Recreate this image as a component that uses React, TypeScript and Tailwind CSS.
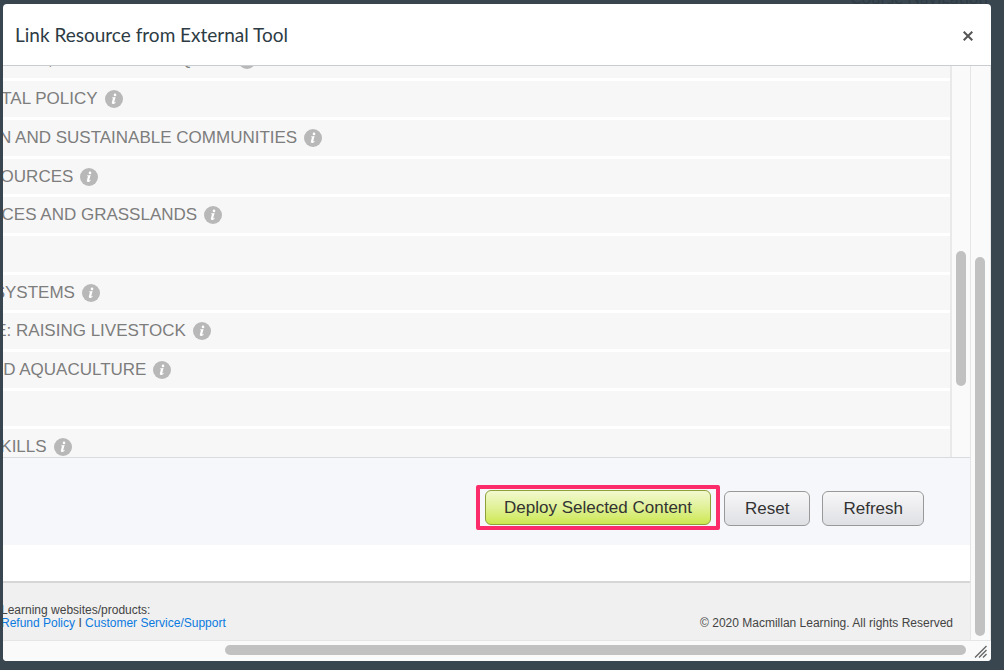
import React from "react";
import clsx from "clsx";

interface Chapter {
  id: number;
  title: string;
}

const chapters: Chapter[] = [
  { id: 1, title: "HUMAN MIGRATION, HEALTH AND EQUITY" },
  { id: 2, title: "ENVIRONMENTAL POLICY" },
  { id: 3, title: "URBANIZATION AND SUSTAINABLE COMMUNITIES" },
  { id: 4, title: "MINERAL RESOURCES" },
  { id: 5, title: "SOIL RESOURCES AND GRASSLANDS" },
  { id: 6, title: "" },
  { id: 7, title: "MARINE ECOSYSTEMS" },
  { id: 8, title: "AGRICULTURE: RAISING LIVESTOCK" },
  { id: 9, title: "FISHERIES AND AQUACULTURE" },
  { id: 10, title: "" },
  { id: 11, title: "READINESS SKILLS" },
];

function InfoIcon() {
  return (
    <svg viewBox="0 0 18 18" className="size-[18px] shrink-0" aria-hidden="true">
      <circle cx="9" cy="9" r="9" fill="#b8b8b8" />
      <circle cx="10" cy="4.9" r="1.3" fill="#fff" />
      <path
        d="M7 7.4 10.6 7.1 9.2 12.2C9.1 12.7 9.4 12.7 10.4 11.8L10.8 12.2C9.8 13.5 9 14 8 14 7 14 6.6 13.3 6.9 12.3L7.9 8.6C8 8.1 7.8 8 6.9 7.9Z"
        fill="#fff"
      />
    </svg>
  );
}

function ChapterRow({ chapter }: { chapter: Chapter }) {
  return (
    <li className="flex h-[39px] items-center gap-[7px] border-b-3 border-white bg-[#f7f7f7] pr-2 whitespace-nowrap nth-[3n+4]:h-[38px]">
      {chapter.title && (
        <>
          <span>{chapter.title}</span>
          <InfoIcon />
        </>
      )}
    </li>
  );
}

interface ActionButtonProps {
  primary?: boolean;
  children: React.ReactNode;
}

function ActionButton({ primary, children }: ActionButtonProps) {
  return (
    <button
      type="button"
      className={clsx(
        "h-[35px] rounded-md border bg-linear-to-b text-[17px] leading-8 text-[#333]",
        primary
          ? "border-[#8ea03a] from-[#f3f9cf] to-[#cde84c] px-[18px]"
          : "border-[#999] from-[#f7f7f8] to-[#dfe0e4] px-5"
      )}
    >
      {children}
    </button>
  );
}

export default function App() {
  return (
    <div className="relative h-screen overflow-hidden bg-[#394650] pt-1 pr-[13px] pb-[9px] pl-[3px] font-['Liberation_Sans',Arial,sans-serif]">
      {/* page underneath the dialog */}
      <div className="absolute -top-[10px] right-[16px] font-['Lato',sans-serif] text-[17px] leading-4 text-[#2f3b45]">
        Course Navigation
      </div>

      <div
        role="dialog"
        aria-labelledby="dialog-title"
        className="relative flex h-full flex-col overflow-hidden rounded-sm bg-white"
      >
        <header className="flex h-[62px] shrink-0 items-center justify-between border-b border-[#c7cdd1] pt-0.5 pr-4 pl-3">
          <h2
            id="dialog-title"
            className="font-['Lato',sans-serif] text-[19px] text-[#2d3b45]"
          >
            Link Resource from External Tool
          </h2>
          <button type="button" aria-label="Close" className="p-0.5 text-[#555]">
            <svg viewBox="0 0 10 10" className="size-[10px]" stroke="currentColor" strokeWidth="2">
              <path d="M.7.7 9.3 9.3M9.3.7.7 9.3" />
            </svg>
          </button>
        </header>

        <div className="flex min-h-0 flex-1">
          <main className="flex min-w-0 flex-1 flex-col">
            <div className="flex min-h-0 flex-1 overflow-hidden border-b border-[#d9dcdf]">
              <ul className="-mt-6 -ml-[117px] min-w-0 flex-1 text-[17px] text-[#7d7d7d]">
                {chapters.map((chapter) => (
                  <ChapterRow key={chapter.id} chapter={chapter} />
                ))}
              </ul>
              <div className="w-5 shrink-0 border-l-2 border-[#e9e9e9] bg-[#fafafa] px-1 pt-[185px]">
                <div className="h-[135px] rounded-full bg-[#c1c1c1]" />
              </div>
            </div>

            <div className="flex h-[87px] shrink-0 items-start justify-end bg-[#f5f7fa] pt-[27px] pr-[46px]">
              <div className="mr-1 h-[45px] rounded-xs border-4 border-[#fb2c69] px-[5px] py-px">
                <ActionButton primary>Deploy Selected Content</ActionButton>
              </div>
              <div className="flex gap-3 pt-[6px]">
                <ActionButton>Reset</ActionButton>
                <ActionButton>Refresh</ActionButton>
              </div>
            </div>

            <footer className="mt-[36px] flex h-[59px] shrink-0 items-end justify-between border-t-2 border-[#d6d6d6] bg-[#f0f0f0] pr-[17px] pb-[10px] text-xs leading-[13px] text-[#444]">
              <div className="-ml-0.5">
                <p>Learning websites/products:</p>
                <p>
                  <a href="#refund" className="text-[#0a7ae0]">Refund Policy</a> I{" "}
                  <a href="#support" className="text-[#0a7ae0]">Customer Service/Support</a>
                </p>
              </div>
              <p>© 2020 Macmillan Learning. All rights Reserved</p>
            </footer>
          </main>

          <div className="w-[21px] shrink-0 border-x border-[#e5e5e5] bg-[#fafafa] px-1 pt-[191px]">
            <div className="h-[379px] w-[10px] rounded-full bg-[#c1c1c1]" />
          </div>
        </div>

        <div className="flex h-[21px] shrink-0 items-start justify-end gap-2 border-t border-[#e5e5e5] bg-[#fafafa] pt-1">
          <div className="h-[10px] w-3/4 rounded-full bg-[#c1c1c1]" />
          <svg viewBox="0 0 13 13" className="mr-1 size-[13px]" stroke="#666" strokeWidth="1.4" fill="none">
            <path d="M1 12.500 12.500 1M5 12.500 12.500 5M9 12.500 12.500 9" />
          </svg>
        </div>
      </div>
    </div>
  );
}
